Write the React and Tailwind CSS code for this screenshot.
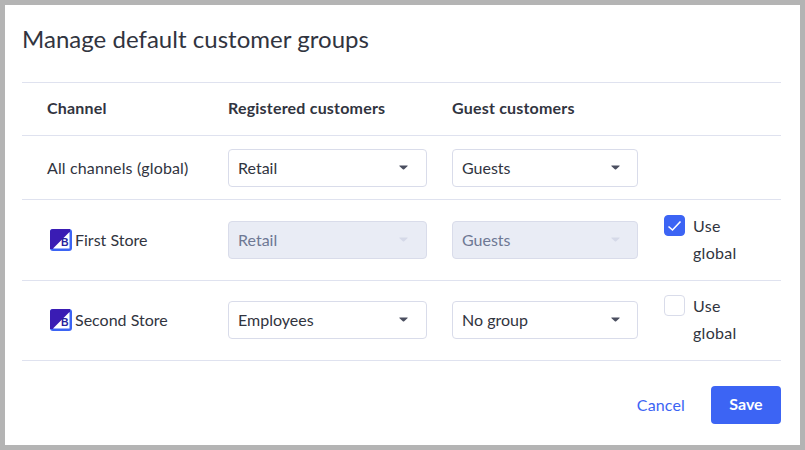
import React from 'react';

function Logo() {
  return (
    <svg width="22" height="22" viewBox="0 0 22 22" className="shrink-0">
      <rect x="0" y="0" width="22" height="22" rx="3" fill="#3c64f4" />
      <path d="M3 0 H20 V3 L3 20 H0 V3 Q0 0 3 0 Z" fill="#3a1cb4" />
      <polygon points="19.5,3 19.5,19.5 3,19.5" fill="#ffffff" />
      <text x="11" y="17" fontSize="10.5" fontWeight="700" fontFamily="Liberation Sans, sans-serif" fill="#2a1f9e">B</text>
    </svg>
  );
}

function Select({ value, width, disabled, caretRight }) {
  return (
    <div className={`flex items-center justify-between h-[38px] rounded border pl-[9px] text-[16px] ${width} ${caretRight} ${disabled ? 'bg-[#e9ecf5] border-[#d9dcea] text-[#6e7894]' : 'bg-white border-[#d9dcea] text-[#313440]'}`}>
      <span>{value}</span>
      <svg width="9" height="5" viewBox="0 0 9 5" className="-mt-px">
        <path d="M0.4 0.4 H8.6 Q8.9 0.9 8.2 1.5 L5.2 4.3 Q4.5 4.9 3.8 4.3 L0.8 1.5 Q0.1 0.9 0.4 0.4 Z" fill={disabled ? '#d5d9e8' : '#4b4f60'} />
      </svg>
    </div>
  );
}

function UseGlobal({ checked, className }) {
  return (
    <div className={`flex gap-2 self-start ${className}`}>
      <div className={`w-[21px] h-[21px] mt-[15px] rounded flex items-center justify-center border ${checked ? 'bg-[#3c64f4] border-[#3c64f4]' : 'bg-white border-[#d9dcea]'}`}>
        {checked && (
          <svg width="15" height="12" viewBox="0 0 15 12" fill="none">
            <path d="M1.5 6.5 L5.5 10 L13.5 1.5" stroke="#ffffff" strokeWidth="1.6" />
          </svg>
        )}
      </div>
      <div className="text-[16px] leading-[27px] mt-[12px] tracking-[0.3px] text-[#313440] w-[60px]">Use global</div>
    </div>
  );
}

function Row({ channel, logo, reg, guest, disabled, useGlobal, className, globalClass }) {
  return (
    <div className={`grid grid-cols-[206px_224px_212px_117px] items-center border-b border-[#dfe2ef] ${className}`}>
      <div className={`flex items-center gap-[3px] text-[16px] text-[#313440] ${logo ? 'pl-[28px]' : 'pl-[25px] tracking-[0.14px]'}`}>
        {logo && <Logo />}
        <span>{channel}</span>
      </div>
      <Select value={reg} width="w-[199px]" caretRight="pr-[18px]" disabled={disabled} />
      <Select value={guest} width="w-[186px]" caretRight="pr-[17px]" disabled={disabled} />
      {useGlobal !== undefined ? <UseGlobal checked={useGlobal} className={globalClass} /> : <div />}
    </div>
  );
}

export default function App() {
  return (
    <div className="w-[805px] h-[450px] bg-[#b4b4b4] p-[5px] font-['Lato',sans-serif]">
      <div className="w-[795px] h-[440px] bg-white pl-[17px] pr-[19px] flex flex-col">
        <h1 className="h-[78px] pt-[16px] text-[24px] leading-[36px] tracking-[0.03px] text-[#313440] border-b border-[#dfe2ef]">Manage default customer groups</h1>
        <div className="grid grid-cols-[206px_224px_212px_117px] items-center h-[53px] pb-[2px] border-b border-[#dfe2ef] text-[16px] font-bold tracking-[0.2px] text-[#313440]">
          <div className="pl-[25px]">Channel</div>
          <div>Registered customers</div>
          <div>Guest customers</div>
          <div />
        </div>
        <Row className="h-[64px]" channel="All channels (global)" reg="Retail" guest="Guests" />
        <Row className="h-[81px]" channel="First Store" logo reg="Retail" guest="Guests" disabled useGlobal={true} />
        <Row className="h-[80px] pb-[2px]" channel="Second Store" logo reg="Employees" guest="No group" useGlobal={false} globalClass="-mt-px" />
        <div className="flex justify-end items-center mt-[25px] gap-[26px]">
          <button className="text-[16px] pb-px tracking-[0.15px] text-[#3c64f4]">Cancel</button>
          <button className="w-[70px] h-[38px] pb-[2px] rounded bg-[#3c64f4] text-white text-[16px] font-bold">Save</button>
        </div>
      </div>
    </div>
  );
}
